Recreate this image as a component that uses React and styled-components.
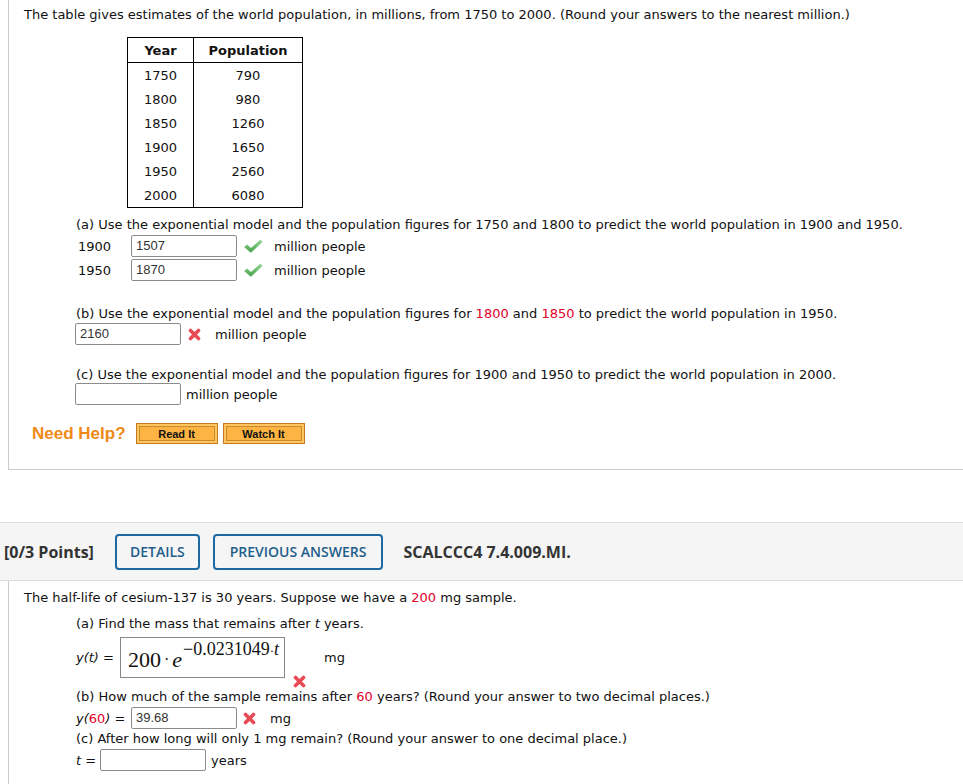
import styled, { createGlobalStyle } from "styled-components";

const GlobalStyle = createGlobalStyle`
  body {
    margin: 0;
    background: #fff;
    font-family: "DejaVu Sans", Verdana, sans-serif;
    font-size: 13px;
    color: #111;
  }
`;

const Page = styled.div`
  width: 963px;
  overflow: hidden;
`;

const Panel = styled.div`
  margin-left: 8px;
  border-left: 1px solid #ccc;
  border-bottom: ${(p) => (p.$last ? "none" : "1px solid #ccc")};
  padding: ${(p) => p.$pad};
`;

const Text = styled.div`
  line-height: 16px;
  margin-left: ${(p) => p.$indent || 0}px;
  margin-top: ${(p) => p.$top || 0}px;
  white-space: nowrap;
`;

const Red = styled.span`
  color: #e4002b;
`;

const Table = styled.table`
  border-collapse: collapse;
  margin: 14px 0 0 103px;
  border: 1px solid #000;
  td, th {
    border-left: 1px solid #000;
    text-align: center;
    padding: 0;
  }
  th {
    height: 24px;
    border-bottom: 1px solid #000;
    font-weight: bold;
  }
  td {
    height: 24px;
  }
`;

const Row = styled.div`
  display: flex;
  align-items: center;
  margin-left: ${(p) => p.$indent || 0}px;
  margin-top: ${(p) => p.$top || 0}px;
  height: ${(p) => p.$h || 22}px;
`;

const Label = styled.span`
  width: ${(p) => p.$w}px;
  padding-left: ${(p) => p.$pl || 0}px;
  box-sizing: border-box;
  white-space: nowrap;
  font-style: ${(p) => (p.$italic ? "italic" : "normal")};
`;

const Input = styled.div`
  width: 106px;
  height: 22px;
  box-sizing: border-box;
  border: 1px solid #8c8c8c;
  border-radius: 2px;
  font-family: "Liberation Sans", Arial, sans-serif;
  font-size: 13px;
  color: #333;
  padding-left: 4px;
  line-height: 20px;
  background: #fff;
`;

const Status = styled.span`
  display: flex;
  align-items: center;
  width: ${(p) => p.$w}px;
  padding-left: ${(p) => p.$pl}px;
  box-sizing: border-box;
`;

const Unit = styled.span`
  margin-left: ${(p) => p.$ml || 0}px;
  white-space: nowrap;
`;

const HelpRow = styled.div`
  display: flex;
  align-items: center;
  margin: 18px 0 0 8px;
`;

const HelpLabel = styled.span`
  font-family: "Liberation Sans", Arial, sans-serif;
  font-weight: bold;
  font-size: 17px;
  color: #ef8a17;
  margin-right: 10px;
`;

const HelpButton = styled.span`
  width: 82px;
  height: 21px;
  box-sizing: border-box;
  margin-right: 5px;
  border: 1px solid #c7791f;
  background: #fdb443;
  box-shadow: inset 0 0 0 2px #ffc65e, inset 0 0 0 3px #c98a32;
  display: flex;
  align-items: center;
  justify-content: center;
  font-family: "Liberation Sans", Arial, sans-serif;
  font-weight: bold;
  font-size: 11px;
  color: #111;
`;

const Gap = styled.div`
  height: 52px;
`;

const Header = styled.div`
  height: 57px;
  background: #f5f5f5;
  border-top: 1px solid #ddd;
  border-bottom: 1px solid #ddd;
  display: flex;
  align-items: center;
  padding-left: 4px;
  font-family: "Open Sans", sans-serif;
`;

const Points = styled.span`
  font-weight: bold;
  font-size: 16px;
  color: #333;
  margin-right: 21px;
`;

const OutlineButton = styled.span`
  height: 36px;
  box-sizing: border-box;
  padding: 0 ${(p) => p.$px}px;
  border: 2px solid #1b69a0;
  border-radius: 4px;
  display: flex;
  align-items: center;
  font-size: 14px;
  font-weight: 600;
  color: #1f5e8c;
  margin-right: ${(p) => p.$mr}px;
`;

const Code = styled.span`
  font-weight: bold;
  font-size: 16px;
  color: #333;
`;

const MathBox = styled.div`
  width: 165px;
  height: 41px;
  box-sizing: border-box;
  border: 1px solid #888;
  display: flex;
  align-items: center;
  padding: 4px 0 0 7px;
  font-family: "Liberation Serif", "Times New Roman", serif;
  font-size: 22px;
  color: #111;
  white-space: nowrap;
`;

const Dot = styled.span`
  font-size: ${(p) => p.$size}px;
  margin: 0 ${(p) => p.$gap}px;
`;

const Sup = styled.span`
  font-size: 18px;
  position: relative;
  top: -10px;
  margin-left: 1px;
`;

const DropIcon = styled.span`
  align-self: flex-end;
  margin: 0 0 -10px 8px;
  display: flex;
`;

function Check() {
  return (
    <svg width="20" height="16" viewBox="0 0 19 15">
      <defs>
        <linearGradient id="cg" x1="0" y1="0" x2="0" y2="1">
          <stop offset="0" stopColor="#95d491" />
          <stop offset="1" stopColor="#44a24b" />
        </linearGradient>
      </defs>
      <path d="M1 8.5 L4 6 L7.5 9.5 L16.5 1.5 L18.5 3.5 L7.5 14 Z" fill="url(#cg)" />
    </svg>
  );
}

function Cross() {
  return (
    <svg width="13" height="13" viewBox="0 0 13 13">
      <path
        d="M2.5 2.5 L10.5 10.5 M10.5 2.5 L2.5 10.5"
        stroke="#ea4a55"
        strokeWidth="3.6"
        strokeLinecap="round"
      />
    </svg>
  );
}

const population = [
  ["1750", "790"],
  ["1800", "980"],
  ["1850", "1260"],
  ["1900", "1650"],
  ["1950", "2560"],
  ["2000", "6080"],
];

export default function App() {
  return (
    <Page>
      <GlobalStyle />
      <Panel $pad="7px 0 25px 15px">
        <Text>
          The table gives estimates of the world population, in millions, from 1750 to 2000. (Round your answers to the nearest million.)
        </Text>
        <Table>
          <thead>
            <tr>
              <th style={{ width: 65 }}>Year</th>
              <th style={{ width: 108 }}>Population</th>
            </tr>
          </thead>
          <tbody>
            {population.map(([year, pop]) => (
              <tr key={year}>
                <td>{year}</td>
                <td>{pop}</td>
              </tr>
            ))}
          </tbody>
        </Table>
        <Text $indent={52} $top={9}>
          (a) Use the exponential model and the population figures for 1750 and 1800 to predict the world population in 1900 and 1950.
        </Text>
        <Row $indent={52} $top={2}>
          <Label $w={55} $pl={2}>1900</Label>
          <Input>1507</Input>
          <Status $w={37} $pl={6}><Check /></Status>
          <Unit>million people</Unit>
        </Row>
        <Row $indent={52} $top={2}>
          <Label $w={55} $pl={2}>1950</Label>
          <Input>1870</Input>
          <Status $w={37} $pl={6}><Check /></Status>
          <Unit>million people</Unit>
        </Row>
        <Text $indent={52} $top={25}>
          (b) Use the exponential model and the population figures for <Red>1800</Red> and <Red>1850</Red> to predict the world population in 1950.
        </Text>
        <Row $indent={51} $top={1}>
          <Input>2160</Input>
          <Status $w={34} $pl={7}><Cross /></Status>
          <Unit>million people</Unit>
        </Row>
        <Text $indent={52} $top={22}>
          (c) Use the exponential model and the population figures for 1900 and 1950 to predict the world population in 2000.
        </Text>
        <Row $indent={51} $top={0}>
          <Input />
          <Unit $ml={5}>million people</Unit>
        </Row>
        <HelpRow>
          <HelpLabel>Need Help?</HelpLabel>
          <HelpButton>Read It</HelpButton>
          <HelpButton>Watch It</HelpButton>
        </HelpRow>
      </Panel>
      <Gap />
      <Header>
        <Points>[0/3 Points]</Points>
        <OutlineButton $px={13} $mr={13}>DETAILS</OutlineButton>
        <OutlineButton $px={15} $mr={20}>PREVIOUS ANSWERS</OutlineButton>
        <Code>SCALCCC4 7.4.009.MI.</Code>
      </Header>
      <Panel $last $pad="9px 0 30px 15px">
        <Text>
          The half-life of cesium-137 is 30 years. Suppose we have a <Red>200</Red> mg sample.
        </Text>
        <Text $indent={52} $top={10}>
          (a) Find the mass that remains after <i>t</i> years.
        </Text>
        <Row $indent={52} $top={5} $h={41}>
          <Label $w={44} $italic>y(t) <span style={{ fontStyle: "normal" }}>=</span></Label>
          <MathBox>
            200<Dot $size={16} $gap={3}>·</Dot><i>e</i>
            <Sup>−0.0231049<Dot $size={13} $gap={0}>·</Dot><i>t</i></Sup>
          </MathBox>
          <DropIcon><Cross /></DropIcon>
          <Unit $ml={18}>mg</Unit>
        </Row>
        <Text $indent={52} $top={11}>
          (b) How much of the sample remains after <Red>60</Red> years? (Round your answer to two decimal places.)
        </Text>
        <Row $indent={52} $top={2}>
          <Label $w={55} $italic>
            y(<Red style={{ fontStyle: "normal" }}>60</Red>) <span style={{ fontStyle: "normal" }}>=</span>
          </Label>
          <Input>39.68</Input>
          <Status $w={33} $pl={6}><Cross /></Status>
          <Unit>mg</Unit>
        </Row>
        <Text $indent={52} $top={2}>
          (c) After how long will only 1 mg remain? (Round your answer to one decimal place.)
        </Text>
        <Row $indent={52} $top={2}>
          <Label $w={24} $italic>t <span style={{ fontStyle: "normal" }}>=</span></Label>
          <Input />
          <Unit $ml={5}>years</Unit>
        </Row>
      </Panel>
    </Page>
  );
}
